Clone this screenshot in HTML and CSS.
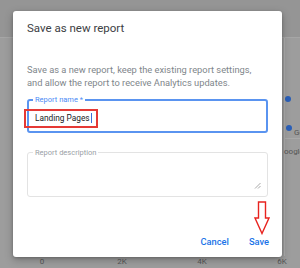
FILE: index.html
```html
<!DOCTYPE html>
<html>
<head>
<meta charset="utf-8">
<link rel="stylesheet" href="styles.css">
</head>
<body>
<div class="page">
  <div class="page-top"></div>
  <div class="page-main">
    <div class="chart"></div>
    <div class="legend">
      <span class="dot"></span>
      <div class="legend-row"><span class="dot"></span><span class="lg">Go</span></div>
      <div class="legend-sep"></div>
      <span class="lg lg2">oogle</span>
    </div>
  </div>
  <div class="axis"><span>0</span><span>2K</span><span>4K</span><span>6K</span></div>
</div>

<div class="dialog">
  <div class="title">Save as new report</div>
  <p class="desc">Save as a new report, keep the existing report settings, and allow the report to receive Analytics updates.</p>
  <div class="field field-active">
    <span class="field-label">Report name *</span>
    <span class="field-value">Landing Pages</span><span class="caret"></span>
  </div>
  <div class="field field-area">
    <span class="field-label label-gray">Report description</span>
    <svg class="resizer" width="7" height="7" viewBox="0 0 7 7"><path d="M1 6.5 L6.5 1 M4 6.5 L6.5 4" stroke="#9e9e9e" stroke-width="0.9" fill="none"/></svg>
  </div>
  <div class="actions">
    <span class="btn">Cancel</span>
    <span class="btn">Save</span>
  </div>
</div>

<div class="mark-box"></div>
<svg class="mark-arrow" width="16" height="34" viewBox="0 0 16 34"><path d="M4.5 1 H11.5 V17 H15 L8 32.5 L1 17 H4.5 Z" fill="none" stroke="#e8231f" stroke-width="1.4" stroke-linejoin="miter"/></svg>
</body>
</html>
```
FILE: styles.css
```css
html, body {
  margin: 0;
  padding: 0;
}
body {
  width: 300px;
  height: 268px;
  overflow: hidden;
  position: relative;
  background: #9d9d9d;
  font-family: Roboto, "Liberation Sans", sans-serif;
}
.page {
  height: 268px;
  display: flex;
  flex-direction: column;
}
.page-top {
  height: 37px;
  background: #959595;
  border-bottom: 1px solid #a6a6a6;
}
.page-main {
  flex: 1;
  display: flex;
}
.chart {
  flex: 1;
}
.legend {
  width: 16px;
  border-left: 1px solid #adadad;
  display: flex;
  flex-direction: column;
  align-items: flex-start;
  padding-top: 58px;
  box-sizing: border-box;
}
.dot {
  width: 6px;
  height: 6px;
  border-radius: 50%;
  background: #2a5fb8;
  margin-left: 0;
}
.legend-row {
  display: flex;
  align-items: flex-start;
  margin-top: 23px;
  margin-left: 1px;
}
.legend-row .lg {
  margin-left: 2px;
  margin-top: 3px;
}
.lg {
  font-size: 8px;
  line-height: 9px;
  color: #555;
}
.legend-sep {
  height: 1px;
  width: 17px;
  background: #a9a9a9;
  margin-top: 1px;
}
.lg2 {
  margin-top: 8px;
  margin-left: -1px;
}
.axis {
  height: 12px;
  display: flex;
  gap: 40px;
  padding-left: 22px;
}
.axis span {
  width: 40px;
  flex: none;
  text-align: center;
  font-size: 8px;
  line-height: 12px;
  color: #575757;
}

.dialog {
  position: absolute;
  left: 13px;
  top: 11px;
  width: 269px;
  height: 246px;
  box-sizing: border-box;
  background: #fff;
  border-radius: 3px;
  box-shadow: 0 3px 8px rgba(0,0,0,0.25), 0 1px 3px rgba(0,0,0,0.2);
  padding: 10px 14px 0 14px;
  display: flex;
  flex-direction: column;
}
.title {
  font-size: 11.5px;
  line-height: 14px;
  color: #3c4043;
}
.desc {
  margin: 28px 0 0 0;
  font-size: 9.3px;
  line-height: 13px;
  color: #80868b;
}
.field {
  position: relative;
  border-radius: 3px;
  box-sizing: border-box;
  display: flex;
  align-items: center;
}
.field-active {
  margin-top: 10px;
  height: 34px;
  border: 2px solid #5a94f0;
  padding: 4px 0 0 6px;
}
.field-label {
  position: absolute;
  top: -6px;
  left: 4px;
  padding: 0 2px;
  background: #fff;
  font-size: 7.5px;
  line-height: 9px;
  color: #4c8bf5;
}
.label-gray {
  left: 5px;
  top: -5px;
  color: #9aa0a6;
}
.field-value {
  font-size: 8.3px;
  color: #202124;
}
.caret {
  width: 1px;
  height: 10px;
  background: #3b6fd8;
  margin-left: 1px;
}
.field-area {
  margin-top: 19px;
  height: 45px;
  border: 1px solid #e3e3e3;
  justify-content: flex-end;
  align-items: flex-end;
  padding: 0 6px 7px 0;
}
.resizer {
  display: block;
}
.actions {
  margin-top: auto;
  display: flex;
  justify-content: flex-end;
  gap: 20px;
  padding: 0 0 10px 0;
  margin-right: -1px;
}
.btn {
  font-size: 9.3px;
  line-height: 10px;
  font-weight: 500;
  color: #1a73e8;
}
.mark-box {
  position: absolute;
  left: 24px;
  top: 109px;
  width: 74px;
  height: 19px;
  box-sizing: border-box;
  border: 2px solid #e53935;
}
.mark-arrow {
  position: absolute;
  left: 254px;
  top: 201px;
}
```
